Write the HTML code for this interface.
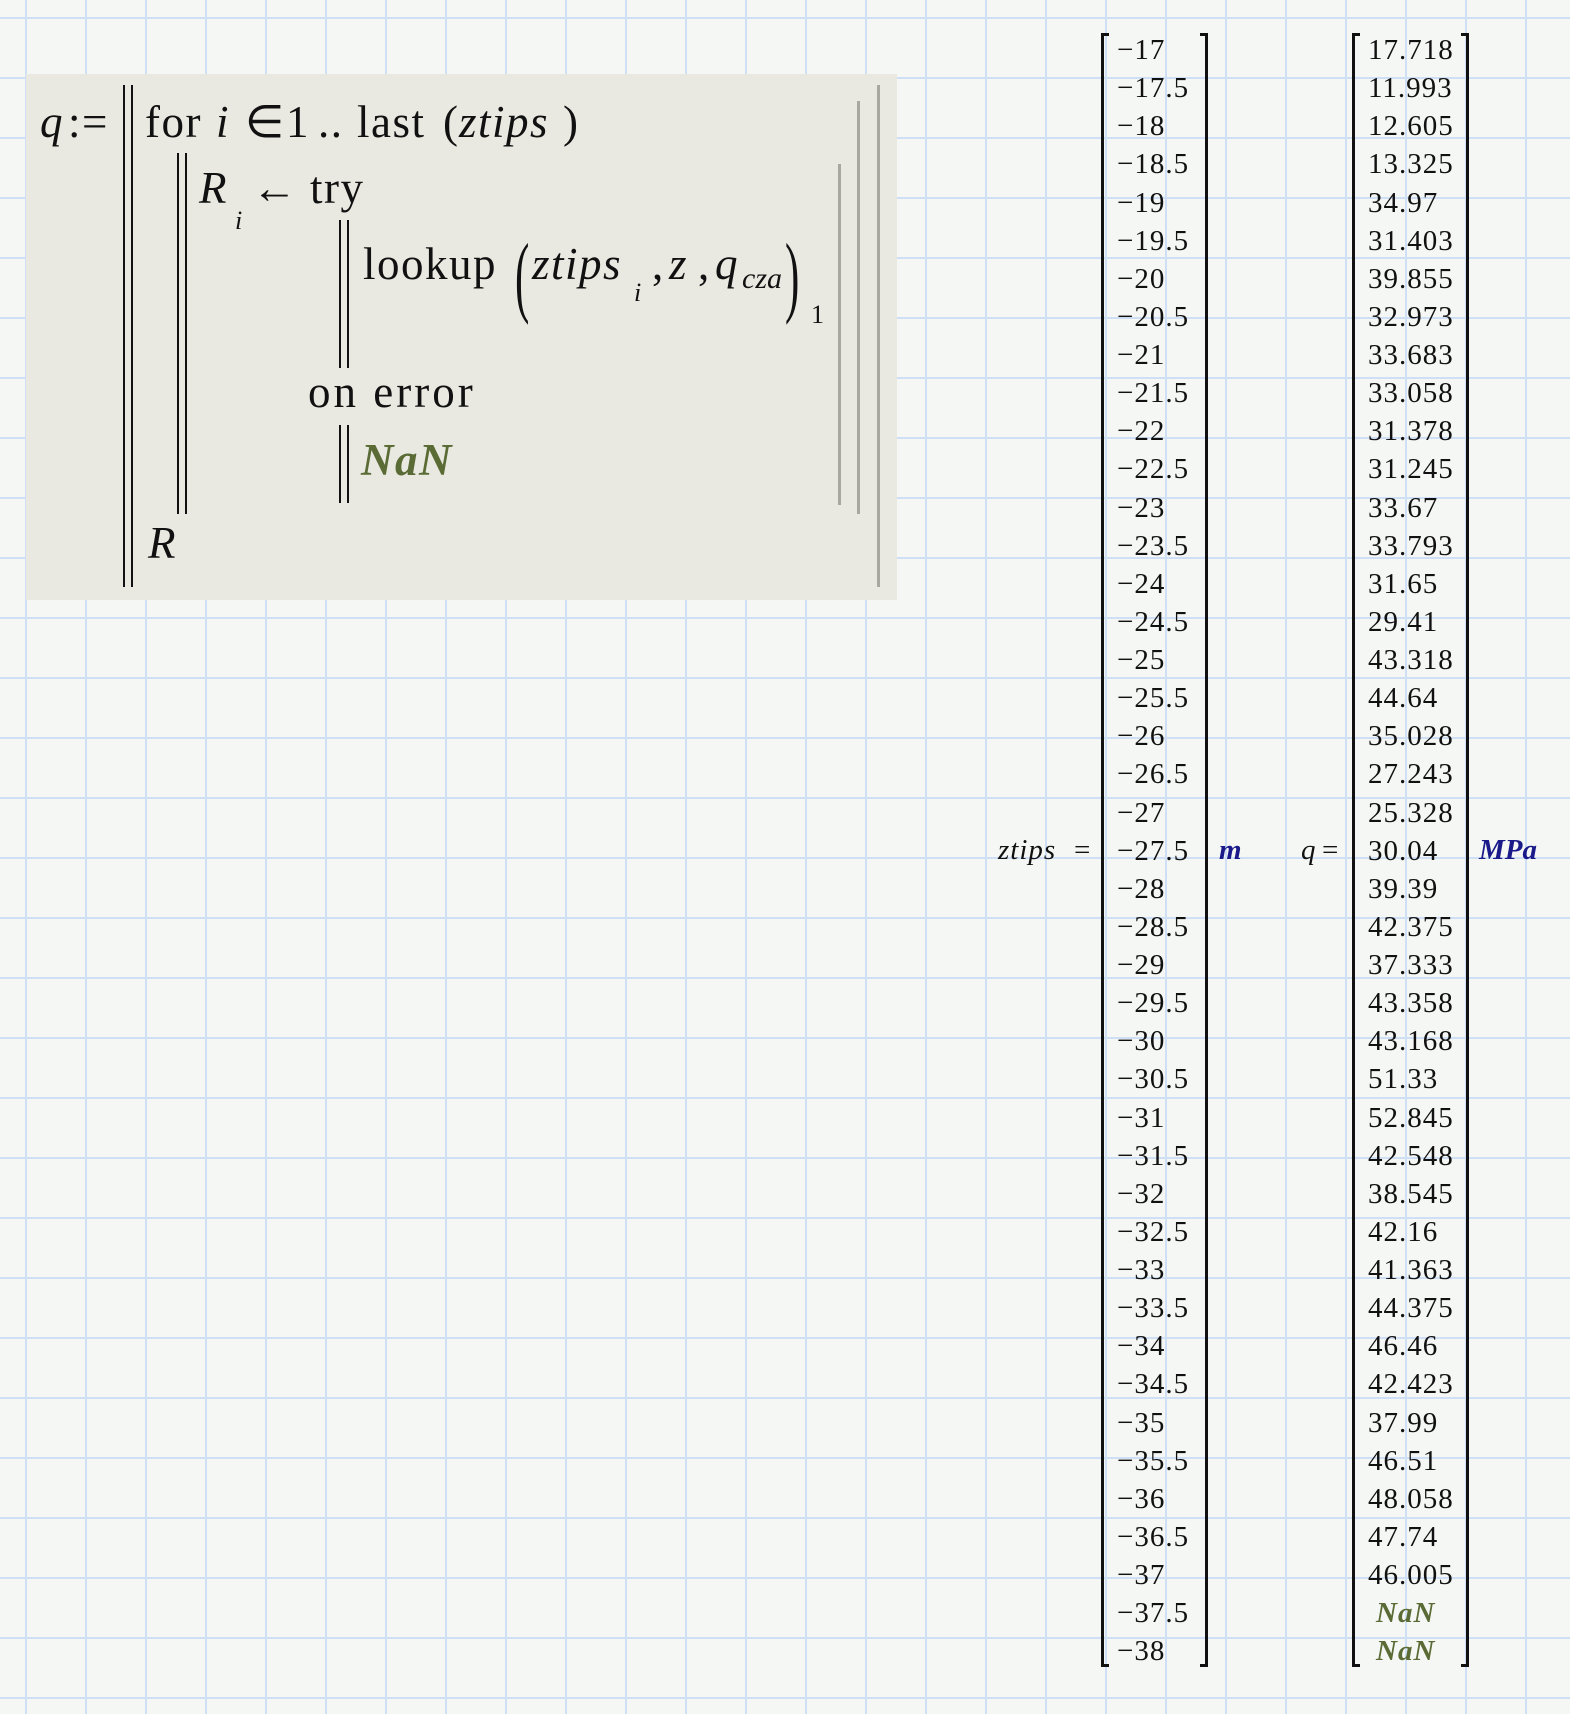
<!DOCTYPE html>
<html><head><meta charset="utf-8">
<style>
html,body{margin:0;padding:0}
body{width:1570px;height:1714px;position:relative;overflow:hidden;background-color:#f5f7f4;
background-image:linear-gradient(to right,#cfe0f6 0,#cfe0f6 2px,transparent 2px),linear-gradient(to bottom,#cfe0f6 0,#cfe0f6 2px,transparent 2px);
background-size:60px 60px;background-position:25px 17px;font-family:"Liberation Serif",serif;color:#111}
.a{position:absolute;white-space:nowrap;line-height:1}
.p{font-size:45px;letter-spacing:1.5px}
.i{font-style:italic}
.box{position:absolute;left:26px;top:74px;width:871px;height:526px;background:#e9e9e1}
.bar{position:absolute;width:2px;background:#111}
.gb{position:absolute;width:3px;background:#a8a8a0}
.n{font-size:29px;letter-spacing:1px}
.nan{color:#5b6b35;font-style:italic;font-weight:bold}
.br{position:absolute;width:3px;background:#111;top:33px;height:1634px}
.bt{position:absolute;height:3px;width:8px;background:#111}
.u{color:#1a1a8a;font-style:italic;font-weight:bold;font-size:29px}
</style></head><body>
<div class="box"></div>
<div class="a p i" style="left:40px;top:100px">q</div>
<div class="a p" style="left:68px;top:100px">:=</div>
<div class="bar" style="left:123px;top:85px;height:502px"></div>
<div class="bar" style="left:131px;top:85px;height:502px"></div>
<div class="a p" style="left:145px;top:100px">for</div>
<div class="a p i" style="left:216px;top:100px">i</div>
<div class="a p" style="left:245px;top:100px">∈</div>
<div class="a p" style="left:286px;top:100px">1</div>
<div class="a p" style="left:318px;top:100px">..</div>
<div class="a p" style="left:357px;top:100px">last</div>
<div class="a p" style="left:443px;top:100px">(</div>
<div class="a p i" style="left:459px;top:100px">ztips</div>
<div class="a p" style="left:563px;top:100px">)</div>

<div class="bar" style="left:177px;top:153px;height:361px"></div>
<div class="bar" style="left:185px;top:153px;height:361px"></div>
<div class="a p i" style="left:199px;top:166px">R</div>
<div class="a i" style="left:235px;top:208px;font-size:26px">i</div>
<div class="a p" style="left:252px;top:166px">←</div>
<div class="a p" style="left:310px;top:166px">try</div>

<div class="bar" style="left:339px;top:220px;height:148px"></div>
<div class="bar" style="left:347px;top:220px;height:148px"></div>
<div class="a p" style="left:363px;top:242px">lookup</div>
<div class="a" style="left:515px;top:232px;font-size:43px;transform:scaleY(2.1);transform-origin:top left">(</div>
<div class="a p i" style="left:532px;top:242px">ztips</div>
<div class="a i" style="left:634px;top:280px;font-size:26px">i</div>
<div class="a p" style="left:652px;top:242px">,</div>
<div class="a p i" style="left:669px;top:242px">z</div>
<div class="a p" style="left:698px;top:242px">,</div>
<div class="a p i" style="left:715px;top:242px">q</div>
<div class="a i" style="left:742px;top:264px;font-size:30px">cza</div>
<div class="a" style="left:785px;top:232px;font-size:43px;transform:scaleY(2.1);transform-origin:top left">)</div>
<div class="a" style="left:811px;top:302px;font-size:26px">1</div>

<div class="a p" style="left:308px;top:370px;letter-spacing:3px">on error</div>
<div class="bar" style="left:339px;top:425px;height:78px"></div>
<div class="bar" style="left:347px;top:425px;height:78px"></div>
<div class="a p nan" style="left:361px;top:438px">NaN</div>

<div class="a p i" style="left:148px;top:521px">R</div>

<div class="gb" style="left:838px;top:164px;height:341px"></div>
<div class="gb" style="left:857px;top:101px;height:413px"></div>
<div class="gb" style="left:877px;top:85px;height:502px"></div>

<div class="a n i" style="left:998px;top:836px">ztips</div>
<div class="a n" style="left:1074px;top:836px">=</div>
<div class="a u" style="left:1219px;top:836px">m</div>
<div class="a n i" style="left:1301px;top:836px">q</div>
<div class="a n" style="left:1322px;top:836px">=</div>
<div class="a u" style="left:1479px;top:836px">MPa</div>

<div class="br" style="left:1101px"></div><div class="bt" style="left:1101px;top:33px"></div><div class="bt" style="left:1101px;top:1664px"></div>
<div class="br" style="left:1205px"></div><div class="bt" style="left:1200px;top:33px"></div><div class="bt" style="left:1200px;top:1664px"></div>
<div class="br" style="left:1352px"></div><div class="bt" style="left:1352px;top:33px"></div><div class="bt" style="left:1352px;top:1664px"></div>
<div class="br" style="left:1466px"></div><div class="bt" style="left:1461px;top:33px"></div><div class="bt" style="left:1461px;top:1664px"></div>

<div class="a n" style="left:1117px;top:32px;line-height:38.13px;margin-top:-1px">−17<br>−17.5<br>−18<br>−18.5<br>−19<br>−19.5<br>−20<br>−20.5<br>−21<br>−21.5<br>−22<br>−22.5<br>−23<br>−23.5<br>−24<br>−24.5<br>−25<br>−25.5<br>−26<br>−26.5<br>−27<br>−27.5<br>−28<br>−28.5<br>−29<br>−29.5<br>−30<br>−30.5<br>−31<br>−31.5<br>−32<br>−32.5<br>−33<br>−33.5<br>−34<br>−34.5<br>−35<br>−35.5<br>−36<br>−36.5<br>−37<br>−37.5<br>−38</div>
<div class="a n" style="left:1368px;top:32px;line-height:38.13px;margin-top:-1px">17.718<br>11.993<br>12.605<br>13.325<br>34.97<br>31.403<br>39.855<br>32.973<br>33.683<br>33.058<br>31.378<br>31.245<br>33.67<br>33.793<br>31.65<br>29.41<br>43.318<br>44.64<br>35.028<br>27.243<br>25.328<br>30.04<br>39.39<br>42.375<br>37.333<br>43.358<br>43.168<br>51.33<br>52.845<br>42.548<br>38.545<br>42.16<br>41.363<br>44.375<br>46.46<br>42.423<br>37.99<br>46.51<br>48.058<br>47.74<br>46.005<br><span class="nan" style="margin-left:8px">NaN</span><br><span class="nan" style="margin-left:8px">NaN</span></div>
</body></html>
